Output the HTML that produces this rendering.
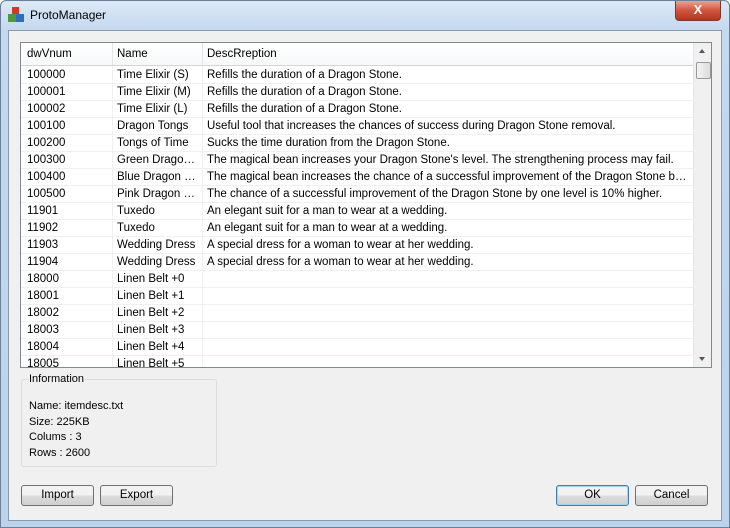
<!DOCTYPE html><html><head><style>
body{margin:0;width:730px;height:528px;overflow:hidden;font-family:"Liberation Sans",sans-serif;font-size:11.5px;color:#000}
.frame{position:absolute;left:0;top:0;width:728px;height:526px;border:1px solid #6b7f99;border-radius:6px 6px 0 0;background:linear-gradient(#dce9f7,#c4d8ee 30px,#bcd3ec);}
.title{position:absolute;left:30px;top:8px;font-size:12px;color:#000}
.close{position:absolute;left:675px;top:1px;width:44px;height:19px;border:1px solid #7a3a30;border-top:none;border-radius:0 0 4px 4px;background:linear-gradient(#e8a491,#d0553f 50%,#b8321c);color:#fff;font-weight:bold;font-size:13px;text-align:center;line-height:18px}
.client{position:absolute;left:8px;top:30px;width:712px;height:489px;background:#f0f0f0;border:1px solid #8a9bb0}
.list{position:absolute;left:11px;top:11px;width:690px;height:324px;border:1px solid #828790;background:#fff;overflow:hidden}
.hdr{position:absolute;left:0;top:0;width:672px;height:22px;border-bottom:1px solid #d5d5d5;background:linear-gradient(#fff,#f7f8fa)}
.c{position:absolute;white-space:nowrap;overflow:hidden;text-overflow:ellipsis}
.row{position:absolute;left:0;width:672px;height:16px;border-bottom:1px solid #f0f0f0;line-height:16px}
.v{position:absolute;top:0;bottom:0;width:1px;background:#f0f0f0}
.sb{position:absolute;left:672px;top:0;width:18px;height:324px;background:#f0f0f0;border-left:1px solid #e6e6e6}
.thumb{position:absolute;left:2px;top:19px;width:13px;height:15px;border:1px solid #999;border-radius:2px;background:linear-gradient(90deg,#f4f4f4,#dcdcdc)}
.grp{position:absolute;left:12px;top:348px;width:194px;height:86px;border:1px solid #dcdcdc;border-radius:3px}
.grp .lg{position:absolute;left:6px;top:-7px;background:#f0f0f0;padding:0 1px;font-size:11px}
.btn{position:absolute;top:454px;width:71px;height:19px;border:1px solid #707070;border-radius:3px;background:linear-gradient(#f2f2f2 50%,#dddddd 50%,#cfcfcf);text-align:center;line-height:19px;font-size:11.5px}
</style></head><body>
<div class="frame"></div>
<svg style="position:absolute;left:7px;top:6px" width="18" height="18"><rect x="5" y="1" width="7" height="7" fill="#d9352a"/><rect x="1" y="8" width="8" height="8" fill="#4c9a3a"/><rect x="9" y="8" width="8" height="8" fill="#2f6fc0"/></svg>
<div class="title">ProtoManager</div>
<div class="close">X</div>
<div class="client">
<div class="list">
<div class="hdr"><div class="c" style="left:6px;top:5px">dwVnum</div><div class="c" style="left:96px;top:5px">Name</div><div class="c" style="left:186px;top:5px">DescRreption</div>
<div style="position:absolute;left:91px;top:0;height:22px;width:1px;background:#e5e5e5"></div><div style="position:absolute;left:181px;top:0;height:22px;width:1px;background:#e5e5e5"></div></div>
<div class="v" style="left:91px;top:23px"></div><div class="v" style="left:181px;top:23px"></div>
<div id="rows"></div>
<div class="sb"><div style="position:absolute;left:5px;top:6px;width:0;height:0;border:3px solid transparent;border-bottom:4px solid #555;border-top:none"></div><div class="thumb"></div><div style="position:absolute;left:5px;top:314px;width:0;height:0;border:3px solid transparent;border-top:4px solid #555;border-bottom:none"></div></div>
</div>
<div class="grp"><span class="lg">Information</span>
<div style="position:absolute;left:7px;top:19px;line-height:15.7px;font-size:11px">Name: itemdesc.txt<br>Size: 225KB<br>Colums : 3<br>Rows : 2600</div></div>
<div class="btn" style="left:12px">Import</div>
<div class="btn" style="left:91px">Export</div>
<div class="btn" style="left:547px;border-color:#3c7fb1;box-shadow:inset 0 0 0 1px #9cd6f6">OK</div>
<div class="btn" style="left:626px">Cancel</div>
</div>
<script>
var d=[["100000","Time Elixir (S)","Refills the duration of a Dragon Stone."],["100001","Time Elixir (M)","Refills the duration of a Dragon Stone."],["100002","Time Elixir (L)","Refills the duration of a Dragon Stone."],["100100","Dragon Tongs","Useful tool that increases the chances of success during Dragon Stone removal."],["100200","Tongs of Time","Sucks the time duration from the Dragon Stone."],["100300","Green Dragon Bean","The magical bean increases your Dragon Stone's level. The strengthening process may fail."],["100400","Blue Dragon Bean","The magical bean increases the chance of a successful improvement of the Dragon Stone by one level."],["100500","Pink Dragon Bean","The chance of a successful improvement of the Dragon Stone by one level is 10% higher."],["11901","Tuxedo","An elegant suit for a man to wear at a wedding."],["11902","Tuxedo","An elegant suit for a man to wear at a wedding."],["11903","Wedding Dress","A special dress for a woman to wear at her wedding."],["11904","Wedding Dress","A special dress for a woman to wear at her wedding."],["18000","Linen Belt +0",""],["18001","Linen Belt +1",""],["18002","Linen Belt +2",""],["18003","Linen Belt +3",""],["18004","Linen Belt +4",""],["18005","Linen Belt +5",""]];
var h="";d.forEach(function(r,i){h+='<div class="row" style="top:'+(24+i*17)+'px"><div class="c" style="left:6px">'+r[0]+'</div><div class="c" style="left:96px;width:82px">'+r[1]+'</div><div class="c" style="left:186px;width:482px">'+r[2]+'</div></div>'});
document.getElementById("rows").innerHTML=h;
</script>
</body></html>
